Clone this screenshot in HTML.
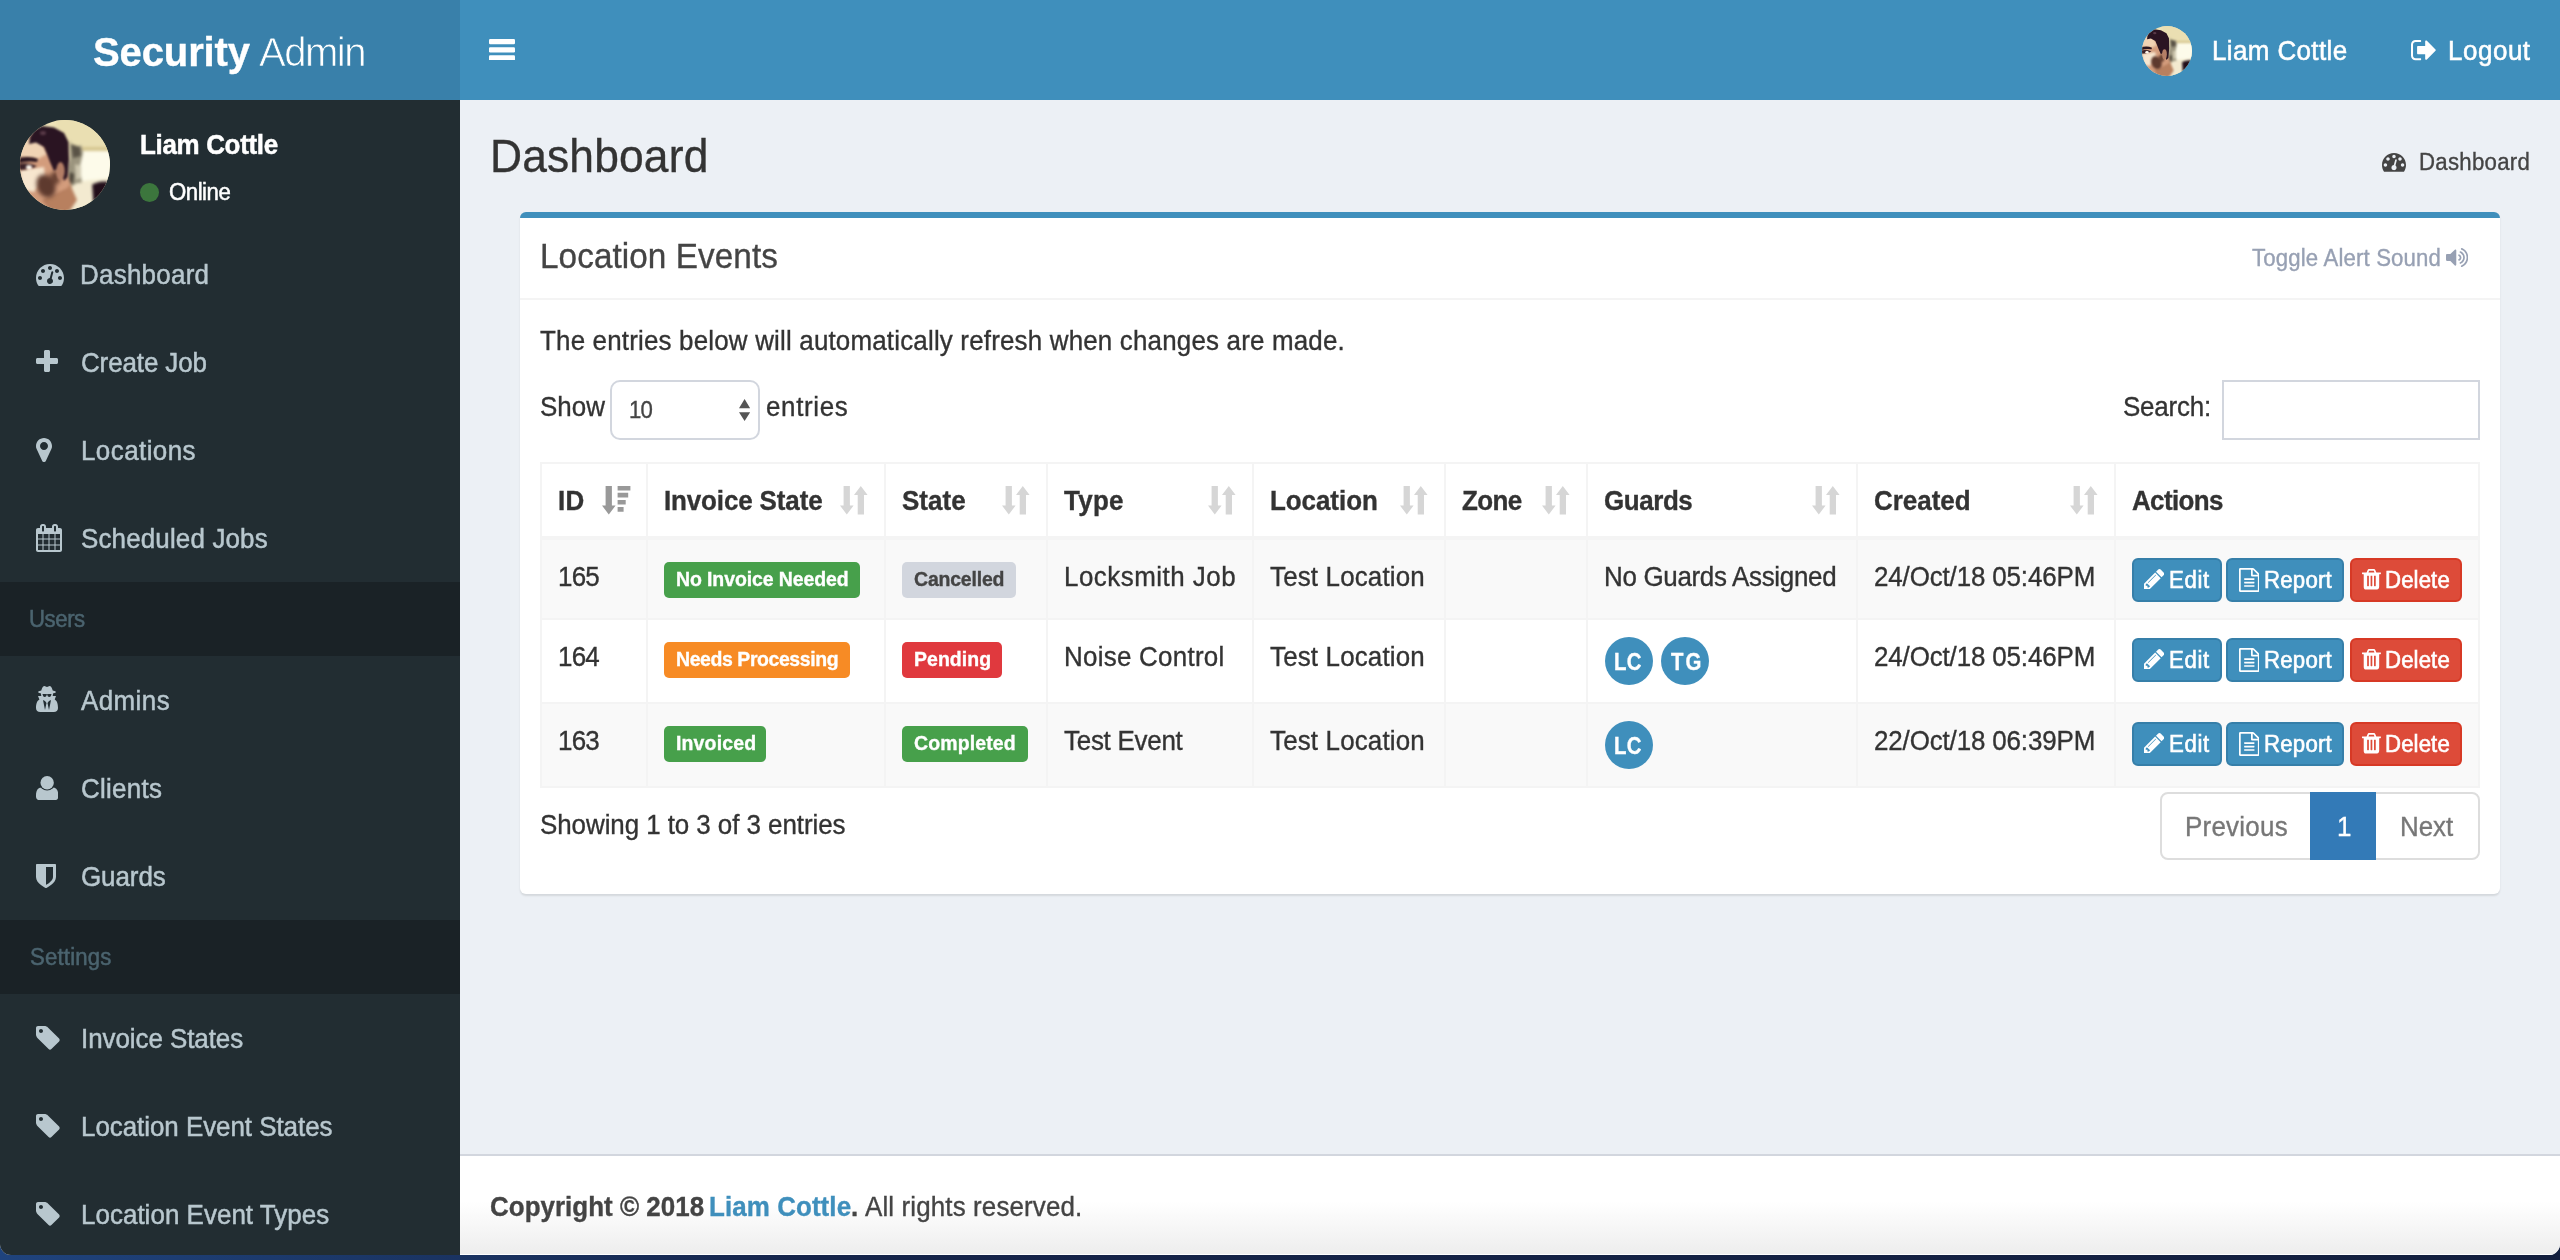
<!DOCTYPE html>
<html lang="en"><head><meta charset="utf-8"><title>Security Admin | Dashboard</title>
<style>
*{box-sizing:border-box;margin:0;padding:0}
html,body{width:2560px;height:1260px;overflow:hidden}
body{font-family:"Liberation Sans",sans-serif;background:linear-gradient(90deg,#1f437d 0,#1b3768 14%,#15244a 32%,#131f3e 100%);color:#333;position:relative;font-size:26.9px;-webkit-text-stroke:.35px}
svg.fa{display:inline-block;fill:currentColor;vertical-align:middle}
svg.ink{position:absolute;fill:currentColor;display:block}
a{text-decoration:none;color:inherit}
.f{display:inline-block}
.t{position:absolute;white-space:nowrap;line-height:40px}
#win{position:absolute;left:0;top:0;width:2560px;height:1255px;overflow:hidden;background:#ecf0f5;border-radius:0 0 11px 11px}
/* header */
#logo{position:absolute;left:0;top:0;width:460px;height:100px;background:#3980aa;color:#fff;font-size:41.5px;white-space:nowrap}
#logo .t{left:90px;top:32px}
#logo b{font-weight:bold}
#logo i{font-style:normal;font-weight:normal;-webkit-text-stroke:.75px #3980aa}
#nav{position:absolute;left:460px;top:0;right:0;height:100px;background:#3f8fbc;color:#fff;-webkit-text-stroke:.55px}
#navuser{position:absolute;left:1682px;top:26px;width:50px;height:50px;border-radius:50%;overflow:hidden}
/* sidebar */
#side{position:absolute;left:0;top:100px;width:460px;bottom:0;background:#222d32;color:#b8c7ce;-webkit-text-stroke:.5px}
#upimg{position:absolute;left:20px;top:20px;width:90px;height:90px;border-radius:50%;overflow:hidden}
#upname{left:140px;top:24px;color:#fff;font-weight:bold;font-size:26.9px}
#upstat{left:168px;top:72px;color:#fff;font-size:23px}
#updot{position:absolute;left:140px;top:83px;width:19px;height:19px;border-radius:50%;background:#3c763d}
ul.menu{position:absolute;left:0;top:130px;width:460px;list-style:none}
ul.menu li{height:88px;line-height:88px;font-size:26.9px;position:relative;white-space:nowrap}
ul.menu li .ic{position:absolute;left:36px;top:30px;width:40px;height:28px;line-height:0}
ul.menu li .ic svg{vertical-align:top}
ul.menu li .tx{position:absolute;left:82px;top:0}
ul.menu li.hd{height:74px;line-height:74px;background:#1a2226;color:#4b646f;font-size:23px;padding-left:30px}
/* content */
h1{left:490px;top:130px;font-size:46px;font-weight:normal;color:#333}
#crumb{left:2420px;top:138px;font-size:23px;color:#444}
#box{position:absolute;left:520px;top:212px;width:1980px;height:682px;background:#fff;border-top:6px solid #3f8fbc;border-radius:6px;box-shadow:0 2px 2px rgba(0,0,0,.1)}
#boxline{position:absolute;left:520px;top:298px;width:1980px;height:2px;background:#f4f4f4}
h3{left:540px;top:234px;font-size:34.5px;font-weight:normal;color:#444}
#tsound{left:2250px;top:236px;font-size:23px;color:#97a0b3}
#sel{position:absolute;left:610px;top:380px;width:150px;height:60px;border:2px solid #d2d6de;border-radius:10px;background:#fff}
#sel .t{left:17px;top:8px;font-size:23px;color:#444}
#sel svg{position:absolute;left:126.9px;top:17px}
#searchi{position:absolute;left:2222px;top:380px;width:258px;height:60px;border:2px solid #d2d6de;background:#fff}
table{position:absolute;left:540px;top:462px;width:1940px;border-collapse:separate;border-spacing:0;table-layout:fixed;font-size:26.9px;border-left:2px solid #f4f4f4;border-top:2px solid #f4f4f4}
th,td{border-right:2px solid #f4f4f4;border-bottom:2px solid #f4f4f4;padding:16px 0 0 16px;text-align:left;vertical-align:top;white-space:nowrap;position:relative;line-height:40px;overflow:visible}
th{font-weight:bold;height:76px;border-bottom-width:4px;color:#333}
tr.r1 td{height:80px}tr.r2 td{height:84px}tr.r3 td{height:84px}
tr.odd td{background:#f9f9f9}
.lbl{position:absolute;left:16px;top:22px;height:36px;border-radius:5px;font-size:20.2px;font-weight:bold;color:#fff;line-height:36px;padding-left:12px}
.g{background:#47a04b}.o{background:#f78b25}.r{background:#e0393e}.c{background:#d2d6de;color:#444}
.av{position:absolute;top:17px;width:48px;height:48px;border-radius:50%;background:#3f8fbc;color:#fff;font-weight:bold;font-size:24px;line-height:48px;padding-left:9px}
.btn{-webkit-text-stroke:.6px;position:absolute;top:18px;height:44px;line-height:40px;border-radius:6px;color:#fff;font-size:23px;padding-left:38px;border:2px solid transparent}
.bp{background:#3f8fbc;border-color:#367fa9}.bd{background:#dd4b39;border-color:#d73925}
.b1{left:16px;width:90px}.b2{left:110px;width:118px}.b3{left:234px;width:112px}
.si{position:absolute;right:16px;top:21.7px;fill:#d6d6d6}
.sd{position:absolute;right:15px;top:21.6px;fill:#999}
#pag{position:absolute;left:2160px;top:792px;width:320px;height:68px;border:2px solid #ddd;border-radius:8px;background:#fff;font-size:26.9px;color:#777}
#pag .t{top:12px}
#pcur{position:absolute;left:148px;top:-2px;width:66px;height:68px;background:#337ab7;color:#fff}
#footer{position:absolute;left:460px;top:1154px;right:0;height:101px;background:linear-gradient(#fff 0,#fff 46%,#ededed 100%);border-top:2px solid #d2d6de;color:#444;font-size:26.9px;box-shadow:inset 0 -1px 0 rgba(255,255,255,.95)}
#footer a{color:#3f8fbc}
</style></head><body>
<div id="win">
<div id="logo"><div class="t"><b class="f" style="letter-spacing:-0.15px;position:relative;left:3.0px;transform:scaleX(0.965);transform-origin:0 0">Security</b> <i class="f" style="letter-spacing:-1.57px;position:relative;left:-5.3px;transform:scaleX(0.965);transform-origin:0 0">Admin</i></div></div>
<div id="nav">
 <svg class="ink" style="left:29px;top:38.7px" width="26" height="21.6" viewBox="0 0 26 21.6" aria-hidden="true"><rect x="0" y="0" width="26" height="5.3" rx="1.2"/><rect x="0" y="8.15" width="26" height="5.3" rx="1.2"/><rect x="0" y="16.3" width="26" height="5.3" rx="1.2"/></svg>
 <div id="navuser"><svg width="50" height="50" viewBox="0 0 90 90"><rect width="90" height="90" fill="#efe4ba"/>
<g style="filter:blur(1.8px)">
<rect x="36" y="-5" width="60" height="34" fill="#eadfb2"/>
<rect x="52" y="27" width="45" height="4" fill="#d6c690"/>
<rect x="60" y="31" width="40" height="40" fill="#fdfbea"/>
<path d="M50 62 L92 58 L92 95 L40 95 Z" fill="#f4edd2"/>
<path d="M70 66 Q78 60 90 62 L92 95 L69 95 Z" fill="#220e1a"/>
<path d="M50 20 L53 30 L61 25 L63 33 L60 46 L62 64 L56 68 L49 64 L47 50 L50 38 Z" fill="#9b947e"/>
<path d="M51 24 L60 27 L61 36 L53 38 Z" fill="#5a5346"/>
<path d="M50 52 L54 54 L53 64 L49 62 Z" fill="#4a4338"/>
<path d="M55 44 L61 46 L61 58 L56 60 Z" fill="#cfc8b0"/>
<path d="M-2 18 L26 14 L46 50 L52 68 L62 92 L30 95 L-5 80 Z" fill="#d39c7c"/>
<path d="M-2 20 L20 18 L27 34 L18 39 L-2 37 Z" fill="#f0d3b4"/>
<path d="M0 50 L24 47 L25 58 L14 72 L2 70 Z" fill="#f7e6cf"/>
<path d="M22 80 L52 66 L64 92 L34 95 Z" fill="#b47c5e"/>
<path d="M44 78 Q50 66 57 63 L72 62 L74 95 L40 95 Z" fill="#f3ead0"/>
<path d="M26 78 Q46 74 50 64 L57 80 L47 95 L34 95 Z" fill="#b8805f"/>
</g>
<g style="filter:blur(2.2px)"><ellipse cx="26" cy="66" rx="9" ry="12" fill="#5e3a2e" transform="rotate(-24 26 66)"/><path d="M30 54 L38 50 L40 62 L34 66 Z" fill="#6a4334"/></g>
<g style="filter:blur(1.3px)">
<path d="M9 24 L10 17 L14 10 L22 6 L34 7.5 L44 13 L48.5 22 L49 40 L47.5 57 L44 61 L40 47 L34 51 L30 42 L27 34 L24 27 L16 22.5 Z" fill="#2a1422"/>
<ellipse cx="40.5" cy="51" rx="4.2" ry="9" fill="#b47e66"/>
<path d="M-1 38 Q10 35.5 18 39 L17 42 Q8 40.5 -1 43 Z" fill="#2a1620"/>
<path d="M-1 44 Q8 42 17 46 Q10 50 -1 50 Z" fill="#3a2228"/>
<ellipse cx="9" cy="47.2" rx="3" ry="2.2" fill="#fff8ee"/>
<ellipse cx="23" cy="13" rx="3" ry="2" fill="#5a3a48"/>
</g>
</svg></div>
 <div class="t" style="left:1752px;top:30px"><span class="f" style="letter-spacing:0.40px;position:relative;left:-0.3px;top:0.8px;transform:scaleX(0.965);transform-origin:0 0">Liam Cottle</span></div>
 <svg class="ink" style="left:1951.00px;top:40.30px;" width="24.80" height="20.24" viewBox="0.0 -1280.0 1568.0 1280.0" aria-hidden="true"><path d="M640 -96C640 -133 601 -128 576 -128H288C200 -128 128 -200 128 -288V-992C128 -1080 200 -1152 288 -1152H608C653 -1152 640 -1220 640 -1248C640 -1265 625 -1280 608 -1280H288C129 -1280 0 -1151 0 -992V-288C0 -129 129 0 288 0H608C653 0 640 -68 640 -96ZM1568 -640C1568 -657 1561 -673 1549 -685L1005 -1229C993 -1241 977 -1248 960 -1248C925 -1248 896 -1219 896 -1184V-896H448C413 -896 384 -867 384 -832V-448C384 -413 413 -384 448 -384H896V-96C896 -61 925 -32 960 -32C977 -32 993 -39 1005 -51L1549 -595C1561 -607 1568 -623 1568 -640Z"/></svg>
 <div class="t" style="left:1988px;top:30px"><span class="f" style="letter-spacing:0.56px;position:relative;left:-0.4px;top:0.8px;transform:scaleX(0.965);transform-origin:0 0">Logout</span></div>
</div>
<div id="side">
 <div id="upimg"><svg width="90" height="90" viewBox="0 0 90 90"><rect width="90" height="90" fill="#efe4ba"/>
<g style="filter:blur(1.8px)">
<rect x="36" y="-5" width="60" height="34" fill="#eadfb2"/>
<rect x="52" y="27" width="45" height="4" fill="#d6c690"/>
<rect x="60" y="31" width="40" height="40" fill="#fdfbea"/>
<path d="M50 62 L92 58 L92 95 L40 95 Z" fill="#f4edd2"/>
<path d="M70 66 Q78 60 90 62 L92 95 L69 95 Z" fill="#220e1a"/>
<path d="M50 20 L53 30 L61 25 L63 33 L60 46 L62 64 L56 68 L49 64 L47 50 L50 38 Z" fill="#9b947e"/>
<path d="M51 24 L60 27 L61 36 L53 38 Z" fill="#5a5346"/>
<path d="M50 52 L54 54 L53 64 L49 62 Z" fill="#4a4338"/>
<path d="M55 44 L61 46 L61 58 L56 60 Z" fill="#cfc8b0"/>
<path d="M-2 18 L26 14 L46 50 L52 68 L62 92 L30 95 L-5 80 Z" fill="#d39c7c"/>
<path d="M-2 20 L20 18 L27 34 L18 39 L-2 37 Z" fill="#f0d3b4"/>
<path d="M0 50 L24 47 L25 58 L14 72 L2 70 Z" fill="#f7e6cf"/>
<path d="M22 80 L52 66 L64 92 L34 95 Z" fill="#b47c5e"/>
<path d="M44 78 Q50 66 57 63 L72 62 L74 95 L40 95 Z" fill="#f3ead0"/>
<path d="M26 78 Q46 74 50 64 L57 80 L47 95 L34 95 Z" fill="#b8805f"/>
</g>
<g style="filter:blur(2.2px)"><ellipse cx="26" cy="66" rx="9" ry="12" fill="#5e3a2e" transform="rotate(-24 26 66)"/><path d="M30 54 L38 50 L40 62 L34 66 Z" fill="#6a4334"/></g>
<g style="filter:blur(1.3px)">
<path d="M9 24 L10 17 L14 10 L22 6 L34 7.5 L44 13 L48.5 22 L49 40 L47.5 57 L44 61 L40 47 L34 51 L30 42 L27 34 L24 27 L16 22.5 Z" fill="#2a1422"/>
<ellipse cx="40.5" cy="51" rx="4.2" ry="9" fill="#b47e66"/>
<path d="M-1 38 Q10 35.5 18 39 L17 42 Q8 40.5 -1 43 Z" fill="#2a1620"/>
<path d="M-1 44 Q8 42 17 46 Q10 50 -1 50 Z" fill="#3a2228"/>
<ellipse cx="9" cy="47.2" rx="3" ry="2.2" fill="#fff8ee"/>
<ellipse cx="23" cy="13" rx="3" ry="2" fill="#5a3a48"/>
</g>
</svg></div>
 <div class="t" id="upname"><span class="f" style="letter-spacing:-0.33px;position:relative;left:-0.2px;top:1.0px;transform:scaleX(0.965);transform-origin:0 0">Liam Cottle</span></div>
 <div id="updot"></div>
 <div class="t" id="upstat"><span class="f" style="letter-spacing:-0.49px;position:relative;left:0.9px;top:0.3px;transform:scaleX(0.965);transform-origin:0 0">Online</span></div>
 <ul class="menu">
  <li><span class="ic"><svg class="fa " style="" width="28.00" height="28.00" viewBox="0 -1536 1792 1792" aria-hidden="true"><path d="M384 -384C384 -313 327 -256 256 -256C185 -256 128 -313 128 -384C128 -455 185 -512 256 -512C327 -512 384 -455 384 -384ZM576 -832C576 -761 519 -704 448 -704C377 -704 320 -761 320 -832C320 -903 377 -960 448 -960C519 -960 576 -903 576 -832ZM1004 -351C1069 -306 1103 -224 1082 -143C1055 -41 950 21 847 -6C745 -33 683 -138 710 -241C732 -322 801 -377 880 -383L981 -765C990 -799 1025 -820 1059 -811C1093 -802 1113 -767 1105 -733ZM1664 -384C1664 -313 1607 -256 1536 -256C1465 -256 1408 -313 1408 -384C1408 -455 1465 -512 1536 -512C1607 -512 1664 -455 1664 -384ZM1024 -1024C1024 -953 967 -896 896 -896C825 -896 768 -953 768 -1024C768 -1095 825 -1152 896 -1152C967 -1152 1024 -1095 1024 -1024ZM1472 -832C1472 -761 1415 -704 1344 -704C1273 -704 1216 -761 1216 -832C1216 -903 1273 -960 1344 -960C1415 -960 1472 -903 1472 -832ZM1792 -384C1792 -878 1390 -1280 896 -1280C402 -1280 0 -878 0 -384C0 -212 49 -45 141 99C153 117 173 128 195 128H1597C1619 128 1639 117 1651 99C1743 -46 1792 -212 1792 -384Z"/></svg></span><span class="tx"><span class="f" style="letter-spacing:0.27px;position:relative;left:-1.7px;top:1.0px;transform:scaleX(0.965);transform-origin:0 0">Dashboard</span></span></li>
  <li><span class="ic"><svg class="fa " style="" width="22.00" height="28.00" viewBox="0 -1536 1408 1792" aria-hidden="true"><path d="M1408 -800C1408 -853 1365 -896 1312 -896H896V-1312C896 -1365 853 -1408 800 -1408H608C555 -1408 512 -1365 512 -1312V-896H96C43 -896 0 -853 0 -800V-608C0 -555 43 -512 96 -512H512V-96C512 -43 555 0 608 0H800C853 0 896 -43 896 -96V-512H1312C1365 -512 1408 -555 1408 -608Z"/></svg></span><span class="tx"><span class="f" style="letter-spacing:-0.12px;position:relative;left:-1.1px;top:1.0px;transform:scaleX(0.965);transform-origin:0 0">Create Job</span></span></li>
  <li><span class="ic"><svg class="fa " style="" width="16.00" height="28.00" viewBox="0 -1536 1024 1792" aria-hidden="true"><path d="M768 -896C768 -755 653 -640 512 -640C371 -640 256 -755 256 -896C256 -1037 371 -1152 512 -1152C653 -1152 768 -1037 768 -896ZM1024 -896C1024 -1179 795 -1408 512 -1408C229 -1408 0 -1179 0 -896C0 -835 7 -772 33 -717L398 57C418 101 464 128 512 128C560 128 606 101 627 57L991 -717C1017 -772 1024 -835 1024 -896Z"/></svg></span><span class="tx"><span class="f" style="letter-spacing:0.45px;position:relative;left:-1.3px;top:1.0px;transform:scaleX(0.965);transform-origin:0 0">Locations</span></span></li>
  <li><span class="ic"><svg class="fa " style="" width="26.00" height="28.00" viewBox="0 -1536 1664 1792" aria-hidden="true"><path d="M128 128V-160H416V128ZM480 128V-160H800V128ZM128 -224V-544H416V-224ZM480 -224V-544H800V-224ZM128 -608V-896H416V-608ZM864 128V-160H1184V128ZM480 -608V-896H800V-608ZM1248 128V-160H1536V128ZM864 -224V-544H1184V-224ZM512 -1088C512 -1071 497 -1056 480 -1056H416C399 -1056 384 -1071 384 -1088V-1376C384 -1393 399 -1408 416 -1408H480C497 -1408 512 -1393 512 -1376V-1088ZM1248 -224V-544H1536V-224ZM864 -608V-896H1184V-608ZM1248 -608V-896H1536V-608ZM1280 -1088C1280 -1071 1265 -1056 1248 -1056H1184C1167 -1056 1152 -1071 1152 -1088V-1376C1152 -1393 1167 -1408 1184 -1408H1248C1265 -1408 1280 -1393 1280 -1376V-1088ZM1664 -1152C1664 -1222 1606 -1280 1536 -1280H1408V-1376C1408 -1464 1336 -1536 1248 -1536H1184C1096 -1536 1024 -1464 1024 -1376V-1280H640V-1376C640 -1464 568 -1536 480 -1536H416C328 -1536 256 -1464 256 -1376V-1280H128C58 -1280 0 -1222 0 -1152V128C0 198 58 256 128 256H1536C1606 256 1664 198 1664 128Z"/></svg></span><span class="tx"><span class="f" style="letter-spacing:0.16px;position:relative;left:-0.9px;top:1.0px;transform:scaleX(0.965);transform-origin:0 0">Scheduled Jobs</span></span></li>
  <li class="hd"><span class="f" style="letter-spacing:-0.45px;position:relative;left:-0.6px;top:0.1px;transform:scaleX(0.965);transform-origin:0 0">Users</span></li>
  <li><span class="ic"><svg class="fa " style="" width="24.00" height="28.00" viewBox="0 -1536 1536 1792" aria-hidden="true"><path d="M576 0 448 -640 576 -576 672 -448ZM832 0 736 -448 832 -576 960 -640ZM992 -1010C991 -1001 990 -992 988 -983C982 -975 977 -978 973 -966C947 -895 935 -840 845 -840C716 -840 752 -959 710 -959H698C656 -959 692 -840 563 -840C473 -840 461 -895 435 -966C431 -978 426 -975 420 -983C418 -992 417 -1001 416 -1010C417 -1012 418 -1014 420 -1016C429 -1023 501 -1024 516 -1024C573 -1024 627 -1016 683 -1005C690 -1003 697 -1003 704 -1003C711 -1003 718 -1003 725 -1005C781 -1016 835 -1024 892 -1024C907 -1024 979 -1023 988 -1016C990 -1014 991 -1012 992 -1010ZM1408 -131C1408 -309 1377 -578 1198 -671L1280 -896H1066C1084 -948 1091 -1002 1086 -1056C1125 -1064 1280 -1096 1280 -1152C1280 -1211 1110 -1243 1070 -1251C1049 -1326 999 -1440 948 -1499C928 -1522 903 -1536 872 -1536C812 -1536 764 -1474 704 -1474C644 -1474 596 -1536 536 -1536C505 -1536 480 -1522 460 -1499C409 -1440 359 -1326 338 -1251C298 -1243 128 -1211 128 -1152C128 -1096 283 -1064 322 -1056C321 -1046 320 -1035 320 -1024C320 -980 328 -937 342 -896H128L218 -676C32 -586 0 -312 0 -131C0 32 107 128 267 128H1141C1301 128 1408 32 1408 -131Z"/></svg></span><span class="tx"><span class="f" style="letter-spacing:0.43px;position:relative;left:-0.8px;top:1.0px;transform:scaleX(0.965);transform-origin:0 0">Admins</span></span></li>
  <li><span class="ic"><svg width="22.3" height="24.2" viewBox="0 0 22.3 24.2" style="position:absolute;left:0;top:2px" aria-hidden="true"><path fill="currentColor" d="M5.6 11.6H16.7C20.4 11.6 22.3 14.6 22.3 19.2V20.6C22.3 22.9 20.8 24.2 18.8 24.2H3.5C1.5 24.2 0 22.9 0 20.6V19.2C0 14.6 1.9 11.6 5.6 11.6Z"/><circle cx="11.15" cy="6.7" r="7.9" fill="#222d32"/><circle cx="11.15" cy="6.7" r="6.7" fill="currentColor"/></svg>
</span><span class="tx"><span class="f" style="letter-spacing:0.28px;position:relative;left:-0.8px;top:1.1px;transform:scaleX(0.965);transform-origin:0 0">Clients</span></span></li>
  <li><span class="ic"><svg class="fa " style="" width="20.00" height="28.00" viewBox="0 -1536 1280 1792" aria-hidden="true"><path d="M1088 -576C1088 -431 960 -300 853 -216C773 -153 691 -106 640 -79V-1216H1088V-576ZM1280 -1344C1280 -1379 1251 -1408 1216 -1408H64C29 -1408 0 -1379 0 -1344V-576C0 -155 589 111 614 122C622 126 631 128 640 128C649 128 658 126 666 122C691 111 1280 -155 1280 -576Z"/></svg></span><span class="tx"><span class="f" style="letter-spacing:-0.07px;position:relative;left:-0.8px;top:1.1px;transform:scaleX(0.965);transform-origin:0 0">Guards</span></span></li>
  <li class="hd"><span class="f" style="letter-spacing:0.17px;position:relative;left:0.1px;top:0.1px;transform:scaleX(0.965);transform-origin:0 0">Settings</span></li>
  <li><span class="ic"><svg class="fa " style="" width="24.00" height="28.00" viewBox="0 -1536 1536 1792" aria-hidden="true"><path d="M448 -1088C448 -1017 391 -960 320 -960C249 -960 192 -1017 192 -1088C192 -1159 249 -1216 320 -1216C391 -1216 448 -1159 448 -1088ZM1515 -512C1515 -546 1501 -579 1478 -603L763 -1317C712 -1368 615 -1408 544 -1408H128C58 -1408 0 -1350 0 -1280V-864C0 -793 40 -696 91 -646L806 70C829 93 862 107 896 107C930 107 963 93 987 70L1478 -422C1501 -445 1515 -478 1515 -512Z"/></svg></span><span class="tx"><span class="f" style="letter-spacing:-0.07px;position:relative;left:-1.3px;top:0.9px;transform:scaleX(0.965);transform-origin:0 0">Invoice States</span></span></li>
  <li><span class="ic"><svg class="fa " style="" width="24.00" height="28.00" viewBox="0 -1536 1536 1792" aria-hidden="true"><path d="M448 -1088C448 -1017 391 -960 320 -960C249 -960 192 -1017 192 -1088C192 -1159 249 -1216 320 -1216C391 -1216 448 -1159 448 -1088ZM1515 -512C1515 -546 1501 -579 1478 -603L763 -1317C712 -1368 615 -1408 544 -1408H128C58 -1408 0 -1350 0 -1280V-864C0 -793 40 -696 91 -646L806 70C829 93 862 107 896 107C930 107 963 93 987 70L1478 -422C1501 -445 1515 -478 1515 -512Z"/></svg></span><span class="tx"><span class="f" style="letter-spacing:-0.05px;position:relative;left:-1.0px;top:1.0px;transform:scaleX(0.965);transform-origin:0 0">Location Event States</span></span></li>
  <li><span class="ic"><svg class="fa " style="" width="24.00" height="28.00" viewBox="0 -1536 1536 1792" aria-hidden="true"><path d="M448 -1088C448 -1017 391 -960 320 -960C249 -960 192 -1017 192 -1088C192 -1159 249 -1216 320 -1216C391 -1216 448 -1159 448 -1088ZM1515 -512C1515 -546 1501 -579 1478 -603L763 -1317C712 -1368 615 -1408 544 -1408H128C58 -1408 0 -1350 0 -1280V-864C0 -793 40 -696 91 -646L806 70C829 93 862 107 896 107C930 107 963 93 987 70L1478 -422C1501 -445 1515 -478 1515 -512Z"/></svg></span><span class="tx"><span class="f" style="letter-spacing:0.03px;position:relative;left:-1.0px;top:1.0px;transform:scaleX(0.965);transform-origin:0 0">Location Event Types</span></span></li>
 </ul>
</div>
<h1 class="t"><span class="f" style="letter-spacing:0.15px;position:relative;left:0.0px;top:5.5px;transform:scaleX(0.965);transform-origin:0 0">Dashboard</span></h1>
<svg class="ink" style="left:2382.00px;top:152.90px;color:#444" width="24.00" height="18.86" viewBox="0.0 -1280.0 1792.0 1408.0" aria-hidden="true"><path d="M384 -384C384 -313 327 -256 256 -256C185 -256 128 -313 128 -384C128 -455 185 -512 256 -512C327 -512 384 -455 384 -384ZM576 -832C576 -761 519 -704 448 -704C377 -704 320 -761 320 -832C320 -903 377 -960 448 -960C519 -960 576 -903 576 -832ZM1004 -351C1069 -306 1103 -224 1082 -143C1055 -41 950 21 847 -6C745 -33 683 -138 710 -241C732 -322 801 -377 880 -383L981 -765C990 -799 1025 -820 1059 -811C1093 -802 1113 -767 1105 -733ZM1664 -384C1664 -313 1607 -256 1536 -256C1465 -256 1408 -313 1408 -384C1408 -455 1465 -512 1536 -512C1607 -512 1664 -455 1664 -384ZM1024 -1024C1024 -953 967 -896 896 -896C825 -896 768 -953 768 -1024C768 -1095 825 -1152 896 -1152C967 -1152 1024 -1095 1024 -1024ZM1472 -832C1472 -761 1415 -704 1344 -704C1273 -704 1216 -761 1216 -832C1216 -903 1273 -960 1344 -960C1415 -960 1472 -903 1472 -832ZM1792 -384C1792 -878 1390 -1280 896 -1280C402 -1280 0 -878 0 -384C0 -212 49 -45 141 99C153 117 173 128 195 128H1597C1619 128 1639 117 1651 99C1743 -46 1792 -212 1792 -384Z"/></svg>
<div class="t" id="crumb"><span class="f" style="letter-spacing:0.30px;position:relative;left:-0.7px;top:3.5px;transform:scaleX(0.965);transform-origin:0 0">Dashboard</span></div>
<div id="box"></div>
<div id="boxline"></div>
<h3 class="t"><span class="f" style="letter-spacing:0.07px;position:relative;left:-0.3px;top:1.9px;transform:scaleX(0.965);transform-origin:0 0">Location Events</span></h3>
<div class="t" id="tsound"><span class="f" style="letter-spacing:0.16px;position:relative;left:1.9px;top:1.6px;transform:scaleX(0.965);transform-origin:0 0">Toggle Alert Sound</span></div>
<svg class="ink" style="left:2445.60px;top:247.80px;color:#97a0b3" width="22.30" height="19.06" viewBox="0.0 -1351.0 1664.0 1422.0" aria-hidden="true"><path d="M768 -1184C768 -1219 739 -1248 704 -1248C687 -1248 671 -1241 659 -1229L326 -896H64C29 -896 0 -867 0 -832V-448C0 -413 29 -384 64 -384H326L659 -51C671 -39 687 -32 704 -32C739 -32 768 -61 768 -96ZM1152 -640C1152 -740 1091 -838 997 -875C989 -879 980 -880 972 -880C937 -880 908 -852 908 -816C908 -740 1024 -761 1024 -640C1024 -519 908 -540 908 -464C908 -428 937 -400 972 -400C980 -400 989 -401 997 -405C1091 -443 1152 -540 1152 -640ZM1408 -640C1408 -843 1286 -1032 1098 -1111C1090 -1114 1081 -1116 1072 -1116C1037 -1116 1008 -1087 1008 -1052C1008 -1024 1024 -1005 1047 -993C1074 -979 1099 -967 1123 -949C1222 -877 1280 -762 1280 -640C1280 -518 1222 -403 1123 -331C1099 -313 1074 -301 1047 -287C1024 -275 1008 -256 1008 -228C1008 -193 1037 -164 1073 -164C1081 -164 1090 -166 1098 -169C1286 -248 1408 -437 1408 -640ZM1664 -640C1664 -947 1481 -1225 1199 -1346C1191 -1349 1182 -1351 1173 -1351C1138 -1351 1109 -1322 1109 -1287C1109 -1258 1124 -1242 1148 -1228C1162 -1220 1178 -1215 1193 -1207C1221 -1192 1249 -1175 1275 -1156C1439 -1035 1536 -844 1536 -640C1536 -436 1439 -245 1275 -124C1249 -105 1221 -88 1193 -73C1178 -65 1162 -60 1148 -52C1124 -38 1109 -22 1109 7C1109 42 1138 71 1173 71C1182 71 1191 69 1199 66C1481 -55 1664 -333 1664 -640Z"/></svg>
<div class="t" style="left:540px;top:320px"><span class="f" style="letter-spacing:0.18px;position:relative;left:0.3px;top:0.6px;transform:scaleX(0.965);transform-origin:0 0">The entries below will automatically refresh when changes are made.</span></div>
<div class="t" style="left:540px;top:386px"><span class="f" style="letter-spacing:-0.01px;position:relative;left:-0.3px;top:0.7px;transform:scaleX(0.965);transform-origin:0 0">Show</span></div>
<div id="sel"><div class="t"><span class="f" style="letter-spacing:-0.81px;position:relative;left:-0.3px;top:-0.5px;transform:scaleX(0.965);transform-origin:0 0">10</span></div><svg width="11.2" height="22" viewBox="0 0 11.2 22"><path d="M5.6 0L11.2 9.2H0Z M0 13.2H11.2L5.6 21.9Z" fill="#555"/></svg></div>
<div class="t" style="left:766px;top:386px"><span class="f" style="letter-spacing:0.68px;position:relative;left:0.4px;top:0.7px;transform:scaleX(0.965);transform-origin:0 0">entries</span></div>
<div class="t" style="left:2122px;top:386px"><span class="f" style="letter-spacing:-0.19px;position:relative;left:0.8px;top:0.7px;transform:scaleX(0.965);transform-origin:0 0">Search:</span></div>
<div id="searchi"></div>
<table>
 <colgroup><col style="width:106px"><col style="width:238px"><col style="width:162px"><col style="width:206px"><col style="width:192px"><col style="width:142px"><col style="width:270px"><col style="width:258px"><col style="width:364px"></colgroup>
 <thead><tr>
  <th><span class="f" style="letter-spacing:0.24px;position:relative;left:-0.1px;top:0.8px;transform:scaleX(0.965);transform-origin:0 0">ID</span><svg class="sd" width="29" height="29" viewBox="0 0 29 29" aria-hidden="true"><path d="M3.6 0H9.9V19.5H13.6L6.8 28.6L0 19.5H3.6Z M15.6 0H28.4V4.4H15.6Z M15.6 6.8H26.2V11.4H15.6Z M15.6 13.9H23.7V18.4H15.6Z M15.6 21.1H21.6V25.7H15.6Z"/></svg>
</th>
  <th><span class="f" style="letter-spacing:-0.13px;position:relative;left:-0.1px;top:0.8px;transform:scaleX(0.965);transform-origin:0 0">Invoice State</span><svg class="si" width="28" height="29" viewBox="0 0 28 29" aria-hidden="true"><path d="M3.6 0H9.9V19.5H13.6L6.8 28.6L0 19.5H3.6Z M20.8 0L27.6 9.1H24V28.6H17.7V9.1H14Z"/></svg>
</th>
  <th><span class="f" style="letter-spacing:0.06px;position:relative;left:0.2px;top:0.8px;transform:scaleX(0.965);transform-origin:0 0">State</span><svg class="si" width="28" height="29" viewBox="0 0 28 29" aria-hidden="true"><path d="M3.6 0H9.9V19.5H13.6L6.8 28.6L0 19.5H3.6Z M20.8 0L27.6 9.1H24V28.6H17.7V9.1H14Z"/></svg>
</th>
  <th><span class="f" style="letter-spacing:0.31px;position:relative;left:0.3px;top:0.8px;transform:scaleX(0.965);transform-origin:0 0">Type</span><svg class="si" width="28" height="29" viewBox="0 0 28 29" aria-hidden="true"><path d="M3.6 0H9.9V19.5H13.6L6.8 28.6L0 19.5H3.6Z M20.8 0L27.6 9.1H24V28.6H17.7V9.1H14Z"/></svg>
</th>
  <th><span class="f" style="letter-spacing:-0.05px;position:relative;left:-0.4px;top:0.8px;transform:scaleX(0.965);transform-origin:0 0">Location</span><svg class="si" width="28" height="29" viewBox="0 0 28 29" aria-hidden="true"><path d="M3.6 0H9.9V19.5H13.6L6.8 28.6L0 19.5H3.6Z M20.8 0L27.6 9.1H24V28.6H17.7V9.1H14Z"/></svg>
</th>
  <th><span class="f" style="letter-spacing:-0.58px;position:relative;left:0.2px;top:0.8px;transform:scaleX(0.965);transform-origin:0 0">Zone</span><svg class="si" width="28" height="29" viewBox="0 0 28 29" aria-hidden="true"><path d="M3.6 0H9.9V19.5H13.6L6.8 28.6L0 19.5H3.6Z M20.8 0L27.6 9.1H24V28.6H17.7V9.1H14Z"/></svg>
</th>
  <th><span class="f" style="letter-spacing:-0.43px;position:relative;left:0.1px;top:0.8px;transform:scaleX(0.965);transform-origin:0 0">Guards</span><svg class="si" width="28" height="29" viewBox="0 0 28 29" aria-hidden="true"><path d="M3.6 0H9.9V19.5H13.6L6.8 28.6L0 19.5H3.6Z M20.8 0L27.6 9.1H24V28.6H17.7V9.1H14Z"/></svg>
</th>
  <th><span class="f" style="position:relative;left:-0.1px;top:0.8px;transform:scaleX(0.965);transform-origin:0 0">Created</span><svg class="si" width="28" height="29" viewBox="0 0 28 29" aria-hidden="true"><path d="M3.6 0H9.9V19.5H13.6L6.8 28.6L0 19.5H3.6Z M20.8 0L27.6 9.1H24V28.6H17.7V9.1H14Z"/></svg>
</th>
  <th><span class="f" style="letter-spacing:-0.66px;position:relative;left:-0.5px;top:0.8px;transform:scaleX(0.965);transform-origin:0 0">Actions</span></th>
 </tr></thead>
 <tbody>
 <tr class="odd r1"><td><span class="f" style="letter-spacing:-0.82px;position:relative;left:0.2px;top:0.9px;transform:scaleX(0.965);transform-origin:0 0">165</span></td>
  <td><span class="lbl g" style="width:196px"><span class="f" style="letter-spacing:-0.11px;position:relative;left:-0.4px;top:-1.0px;transform:scaleX(0.965);transform-origin:0 0">No Invoice Needed</span></span></td>
  <td><span class="lbl c" style="width:114px"><span class="f" style="letter-spacing:-0.20px;position:relative;left:0.2px;top:-1.0px;transform:scaleX(0.965);transform-origin:0 0">Cancelled</span></span></td>
  <td><span class="f" style="letter-spacing:0.50px;position:relative;left:-0.1px;top:0.9px;transform:scaleX(0.965);transform-origin:0 0">Locksmith Job</span></td><td><span class="f" style="letter-spacing:0.16px;position:relative;left:-0.2px;top:0.9px;transform:scaleX(0.965);transform-origin:0 0">Test Location</span></td><td></td>
  <td><span class="f" style="letter-spacing:-0.33px;position:relative;left:0.0px;top:0.9px;transform:scaleX(0.965);transform-origin:0 0">No Guards Assigned</span></td><td><span class="f" style="letter-spacing:-0.15px;position:relative;left:-0.3px;top:0.9px;transform:scaleX(0.965);transform-origin:0 0">24/Oct/18 05:46PM</span></td>
  <td><a class="btn bp b1"><svg class="ink" style="left:9.60px;top:9.20px;" width="20.30" height="20.30" viewBox="0.0 -1387.0 1515.0 1515.0" aria-hidden="true"><path d="M363 0H256V-128H128V-235L219 -326L454 -91ZM886 -928C886 -922 884 -916 879 -911L337 -369C332 -364 326 -362 320 -362C307 -362 298 -371 298 -384C298 -390 300 -396 305 -401L847 -943C852 -948 858 -950 864 -950C877 -950 886 -941 886 -928ZM832 -1120 0 -288V128H416L1248 -704ZM1515 -1024C1515 -1058 1501 -1091 1478 -1115L1243 -1349C1219 -1373 1186 -1387 1152 -1387C1118 -1387 1085 -1373 1062 -1349L896 -1184L1312 -768L1478 -934C1501 -957 1515 -990 1515 -1024Z"/></svg><span class="f" style="letter-spacing:0.64px;position:relative;left:-2.9px;top:-0.4px;transform:scaleX(0.965);transform-origin:0 0">Edit</span></a><a class="btn bp b2"><svg class="ink" style="left:10.60px;top:8.00px;" width="20.60" height="24.03" viewBox="0.0 -1536.0 1536.0 1792.0" aria-hidden="true"><path d="M1468 -1156 1156 -1468C1119 -1505 1045 -1536 992 -1536H96C43 -1536 0 -1493 0 -1440V160C0 213 43 256 96 256H1440C1493 256 1536 213 1536 160V-992C1536 -1045 1505 -1119 1468 -1156ZM1024 -1400C1041 -1394 1058 -1385 1065 -1378L1378 -1065C1385 -1058 1394 -1041 1400 -1024H1024ZM1408 128H128V-1408H896V-992C896 -939 939 -896 992 -896H1408ZM384 -736V-672C384 -654 398 -640 416 -640H1120C1138 -640 1152 -654 1152 -672V-736C1152 -754 1138 -768 1120 -768H416C398 -768 384 -754 384 -736ZM1120 -512H416C398 -512 384 -498 384 -480V-416C384 -398 398 -384 416 -384H1120C1138 -384 1152 -398 1152 -416V-480C1152 -498 1138 -512 1120 -512ZM1120 -256H416C398 -256 384 -242 384 -224V-160C384 -142 398 -128 416 -128H1120C1138 -128 1152 -142 1152 -160V-224C1152 -242 1138 -256 1120 -256Z"/></svg><span class="f" style="letter-spacing:0.24px;position:relative;left:-1.9px;top:-0.4px;transform:scaleX(0.965);transform-origin:0 0">Report</span></a><a class="btn bd b3"><svg class="ink" style="left:10.00px;top:9.00px;" width="18.90" height="20.62" viewBox="0.0 -1408.0 1408.0 1536.0" aria-hidden="true"><path d="M512 -160C512 -142 498 -128 480 -128H416C398 -128 384 -142 384 -160V-864C384 -882 398 -896 416 -896H480C498 -896 512 -882 512 -864V-160ZM768 -160C768 -142 754 -128 736 -128H672C654 -128 640 -142 640 -160V-864C640 -882 654 -896 672 -896H736C754 -896 768 -882 768 -864V-160ZM1024 -160C1024 -142 1010 -128 992 -128H928C910 -128 896 -142 896 -160V-864C896 -882 910 -896 928 -896H992C1010 -896 1024 -882 1024 -864V-160ZM480 -1152 529 -1269C532 -1273 540 -1279 546 -1280H863C868 -1279 877 -1273 880 -1269L928 -1152ZM1408 -1120C1408 -1138 1394 -1152 1376 -1152H1067L997 -1319C977 -1368 917 -1408 864 -1408H544C491 -1408 431 -1368 411 -1319L341 -1152H32C14 -1152 0 -1138 0 -1120V-1056C0 -1038 14 -1024 32 -1024H128V-72C128 38 200 128 288 128H1120C1208 128 1280 34 1280 -76V-1024H1376C1394 -1024 1408 -1038 1408 -1056Z"/></svg><span class="f" style="letter-spacing:0.12px;position:relative;left:-5.0px;top:-0.4px;transform:scaleX(0.965);transform-origin:0 0">Delete</span></a></td></tr>
 <tr class="r2"><td><span class="f" style="letter-spacing:-0.83px;position:relative;left:0.2px;top:1.0px;transform:scaleX(0.965);transform-origin:0 0">164</span></td>
  <td><span class="lbl o" style="width:186px"><span class="f" style="letter-spacing:-0.44px;position:relative;left:-0.4px;top:-0.8px;transform:scaleX(0.965);transform-origin:0 0">Needs Processing</span></span></td>
  <td><span class="lbl r" style="width:100px"><span class="f" style="letter-spacing:0.04px;position:relative;left:-0.3px;top:-0.8px;transform:scaleX(0.965);transform-origin:0 0">Pending</span></span></td>
  <td><span class="f" style="letter-spacing:0.27px;position:relative;left:-0.1px;top:1.0px;transform:scaleX(0.965);transform-origin:0 0">Noise Control</span></td><td><span class="f" style="letter-spacing:0.16px;position:relative;left:-0.2px;top:1.0px;transform:scaleX(0.965);transform-origin:0 0">Test Location</span></td><td></td>
  <td><span class="av" style="left:17px"><span class="f" style="letter-spacing:0.38px;position:relative;left:0.3px;top:0.7px;transform:scaleX(0.85);transform-origin:0 0">LC</span></span><span class="av" style="left:73px"><span class="f" style="letter-spacing:2.43px;position:relative;left:0.9px;top:0.7px;transform:scaleX(0.85);transform-origin:0 0">TG</span></span></td><td><span class="f" style="letter-spacing:-0.15px;position:relative;left:-0.3px;top:1.0px;transform:scaleX(0.965);transform-origin:0 0">24/Oct/18 05:46PM</span></td>
  <td><a class="btn bp b1"><svg class="ink" style="left:9.60px;top:9.20px;" width="20.30" height="20.30" viewBox="0.0 -1387.0 1515.0 1515.0" aria-hidden="true"><path d="M363 0H256V-128H128V-235L219 -326L454 -91ZM886 -928C886 -922 884 -916 879 -911L337 -369C332 -364 326 -362 320 -362C307 -362 298 -371 298 -384C298 -390 300 -396 305 -401L847 -943C852 -948 858 -950 864 -950C877 -950 886 -941 886 -928ZM832 -1120 0 -288V128H416L1248 -704ZM1515 -1024C1515 -1058 1501 -1091 1478 -1115L1243 -1349C1219 -1373 1186 -1387 1152 -1387C1118 -1387 1085 -1373 1062 -1349L896 -1184L1312 -768L1478 -934C1501 -957 1515 -990 1515 -1024Z"/></svg><span class="f" style="letter-spacing:0.64px;position:relative;left:-2.9px;top:-0.4px;transform:scaleX(0.965);transform-origin:0 0">Edit</span></a><a class="btn bp b2"><svg class="ink" style="left:10.60px;top:8.00px;" width="20.60" height="24.03" viewBox="0.0 -1536.0 1536.0 1792.0" aria-hidden="true"><path d="M1468 -1156 1156 -1468C1119 -1505 1045 -1536 992 -1536H96C43 -1536 0 -1493 0 -1440V160C0 213 43 256 96 256H1440C1493 256 1536 213 1536 160V-992C1536 -1045 1505 -1119 1468 -1156ZM1024 -1400C1041 -1394 1058 -1385 1065 -1378L1378 -1065C1385 -1058 1394 -1041 1400 -1024H1024ZM1408 128H128V-1408H896V-992C896 -939 939 -896 992 -896H1408ZM384 -736V-672C384 -654 398 -640 416 -640H1120C1138 -640 1152 -654 1152 -672V-736C1152 -754 1138 -768 1120 -768H416C398 -768 384 -754 384 -736ZM1120 -512H416C398 -512 384 -498 384 -480V-416C384 -398 398 -384 416 -384H1120C1138 -384 1152 -398 1152 -416V-480C1152 -498 1138 -512 1120 -512ZM1120 -256H416C398 -256 384 -242 384 -224V-160C384 -142 398 -128 416 -128H1120C1138 -128 1152 -142 1152 -160V-224C1152 -242 1138 -256 1120 -256Z"/></svg><span class="f" style="letter-spacing:0.24px;position:relative;left:-1.9px;top:-0.4px;transform:scaleX(0.965);transform-origin:0 0">Report</span></a><a class="btn bd b3"><svg class="ink" style="left:10.00px;top:9.00px;" width="18.90" height="20.62" viewBox="0.0 -1408.0 1408.0 1536.0" aria-hidden="true"><path d="M512 -160C512 -142 498 -128 480 -128H416C398 -128 384 -142 384 -160V-864C384 -882 398 -896 416 -896H480C498 -896 512 -882 512 -864V-160ZM768 -160C768 -142 754 -128 736 -128H672C654 -128 640 -142 640 -160V-864C640 -882 654 -896 672 -896H736C754 -896 768 -882 768 -864V-160ZM1024 -160C1024 -142 1010 -128 992 -128H928C910 -128 896 -142 896 -160V-864C896 -882 910 -896 928 -896H992C1010 -896 1024 -882 1024 -864V-160ZM480 -1152 529 -1269C532 -1273 540 -1279 546 -1280H863C868 -1279 877 -1273 880 -1269L928 -1152ZM1408 -1120C1408 -1138 1394 -1152 1376 -1152H1067L997 -1319C977 -1368 917 -1408 864 -1408H544C491 -1408 431 -1368 411 -1319L341 -1152H32C14 -1152 0 -1138 0 -1120V-1056C0 -1038 14 -1024 32 -1024H128V-72C128 38 200 128 288 128H1120C1208 128 1280 34 1280 -76V-1024H1376C1394 -1024 1408 -1038 1408 -1056Z"/></svg><span class="f" style="letter-spacing:0.12px;position:relative;left:-5.0px;top:-0.4px;transform:scaleX(0.965);transform-origin:0 0">Delete</span></a></td></tr>
 <tr class="odd r3"><td><span class="f" style="letter-spacing:-0.79px;position:relative;left:0.2px;top:1.0px;transform:scaleX(0.965);transform-origin:0 0">163</span></td>
  <td><span class="lbl g" style="width:102px"><span class="f" style="letter-spacing:0.15px;position:relative;left:-0.4px;top:-1.3px;transform:scaleX(0.965);transform-origin:0 0">Invoiced</span></span></td>
  <td><span class="lbl g" style="width:126px"><span class="f" style="letter-spacing:0.12px;position:relative;left:0.2px;top:-1.3px;transform:scaleX(0.965);transform-origin:0 0">Completed</span></span></td>
  <td><span class="f" style="letter-spacing:-0.27px;position:relative;left:0.2px;top:1.0px;transform:scaleX(0.965);transform-origin:0 0">Test Event</span></td><td><span class="f" style="letter-spacing:0.16px;position:relative;left:-0.2px;top:1.0px;transform:scaleX(0.965);transform-origin:0 0">Test Location</span></td><td></td>
  <td><span class="av" style="left:17px"><span class="f" style="letter-spacing:0.38px;position:relative;left:0.3px;top:0.7px;transform:scaleX(0.85);transform-origin:0 0">LC</span></span></td><td><span class="f" style="letter-spacing:-0.15px;position:relative;left:-0.3px;top:1.0px;transform:scaleX(0.965);transform-origin:0 0">22/Oct/18 06:39PM</span></td>
  <td><a class="btn bp b1"><svg class="ink" style="left:9.60px;top:9.20px;" width="20.30" height="20.30" viewBox="0.0 -1387.0 1515.0 1515.0" aria-hidden="true"><path d="M363 0H256V-128H128V-235L219 -326L454 -91ZM886 -928C886 -922 884 -916 879 -911L337 -369C332 -364 326 -362 320 -362C307 -362 298 -371 298 -384C298 -390 300 -396 305 -401L847 -943C852 -948 858 -950 864 -950C877 -950 886 -941 886 -928ZM832 -1120 0 -288V128H416L1248 -704ZM1515 -1024C1515 -1058 1501 -1091 1478 -1115L1243 -1349C1219 -1373 1186 -1387 1152 -1387C1118 -1387 1085 -1373 1062 -1349L896 -1184L1312 -768L1478 -934C1501 -957 1515 -990 1515 -1024Z"/></svg><span class="f" style="letter-spacing:0.64px;position:relative;left:-2.9px;top:-0.4px;transform:scaleX(0.965);transform-origin:0 0">Edit</span></a><a class="btn bp b2"><svg class="ink" style="left:10.60px;top:8.00px;" width="20.60" height="24.03" viewBox="0.0 -1536.0 1536.0 1792.0" aria-hidden="true"><path d="M1468 -1156 1156 -1468C1119 -1505 1045 -1536 992 -1536H96C43 -1536 0 -1493 0 -1440V160C0 213 43 256 96 256H1440C1493 256 1536 213 1536 160V-992C1536 -1045 1505 -1119 1468 -1156ZM1024 -1400C1041 -1394 1058 -1385 1065 -1378L1378 -1065C1385 -1058 1394 -1041 1400 -1024H1024ZM1408 128H128V-1408H896V-992C896 -939 939 -896 992 -896H1408ZM384 -736V-672C384 -654 398 -640 416 -640H1120C1138 -640 1152 -654 1152 -672V-736C1152 -754 1138 -768 1120 -768H416C398 -768 384 -754 384 -736ZM1120 -512H416C398 -512 384 -498 384 -480V-416C384 -398 398 -384 416 -384H1120C1138 -384 1152 -398 1152 -416V-480C1152 -498 1138 -512 1120 -512ZM1120 -256H416C398 -256 384 -242 384 -224V-160C384 -142 398 -128 416 -128H1120C1138 -128 1152 -142 1152 -160V-224C1152 -242 1138 -256 1120 -256Z"/></svg><span class="f" style="letter-spacing:0.24px;position:relative;left:-1.9px;top:-0.4px;transform:scaleX(0.965);transform-origin:0 0">Report</span></a><a class="btn bd b3"><svg class="ink" style="left:10.00px;top:9.00px;" width="18.90" height="20.62" viewBox="0.0 -1408.0 1408.0 1536.0" aria-hidden="true"><path d="M512 -160C512 -142 498 -128 480 -128H416C398 -128 384 -142 384 -160V-864C384 -882 398 -896 416 -896H480C498 -896 512 -882 512 -864V-160ZM768 -160C768 -142 754 -128 736 -128H672C654 -128 640 -142 640 -160V-864C640 -882 654 -896 672 -896H736C754 -896 768 -882 768 -864V-160ZM1024 -160C1024 -142 1010 -128 992 -128H928C910 -128 896 -142 896 -160V-864C896 -882 910 -896 928 -896H992C1010 -896 1024 -882 1024 -864V-160ZM480 -1152 529 -1269C532 -1273 540 -1279 546 -1280H863C868 -1279 877 -1273 880 -1269L928 -1152ZM1408 -1120C1408 -1138 1394 -1152 1376 -1152H1067L997 -1319C977 -1368 917 -1408 864 -1408H544C491 -1408 431 -1368 411 -1319L341 -1152H32C14 -1152 0 -1138 0 -1120V-1056C0 -1038 14 -1024 32 -1024H128V-72C128 38 200 128 288 128H1120C1208 128 1280 34 1280 -76V-1024H1376C1394 -1024 1408 -1038 1408 -1056Z"/></svg><span class="f" style="letter-spacing:0.12px;position:relative;left:-5.0px;top:-0.4px;transform:scaleX(0.965);transform-origin:0 0">Delete</span></a></td></tr>
 </tbody>
</table>
<div class="t" style="left:540px;top:805px"><span class="f" style="letter-spacing:-0.07px;position:relative;left:0.2px;top:-0.4px;transform:scaleX(0.965);transform-origin:0 0">Showing 1 to 3 of 3 entries</span></div>
<div id="pag"><div class="t" style="left:24px"><span class="f" style="letter-spacing:0.25px;position:relative;left:-1.2px;top:0.7px;transform:scaleX(0.965);transform-origin:0 0">Previous</span></div><div id="pcur"><div class="t" style="left:26px;top:14px"><span class="f" style="position:relative;left:0.8px;top:0.7px;transform:scaleX(0.965);transform-origin:0 0">1</span></div></div><div class="t" style="left:240px"><span class="f" style="letter-spacing:-0.06px;position:relative;left:-1.6px;top:0.7px;transform:scaleX(0.965);transform-origin:0 0">Next</span></div></div>
<div id="footer"><div class="t" style="left:30px;top:30px"><b><span class="f" style="letter-spacing:0.02px;position:relative;left:-0.4px;top:1.3px;transform:scaleX(0.965);transform-origin:0 0">Copyright © 2018</span> <a><span class="f" style="letter-spacing:0.08px;position:relative;left:-10.1px;top:1.3px;transform:scaleX(0.965);transform-origin:0 0">Liam Cottle</span></a><span class="f" style="position:relative;left:-15.8px;top:1.3px;transform:scaleX(0.965);transform-origin:0 0">.</span></b> <span class="f" style="letter-spacing:0.13px;position:relative;left:-16.9px;top:1.3px;transform:scaleX(0.965);transform-origin:0 0">All rights reserved.</span></div></div>
</div>
</body></html>
